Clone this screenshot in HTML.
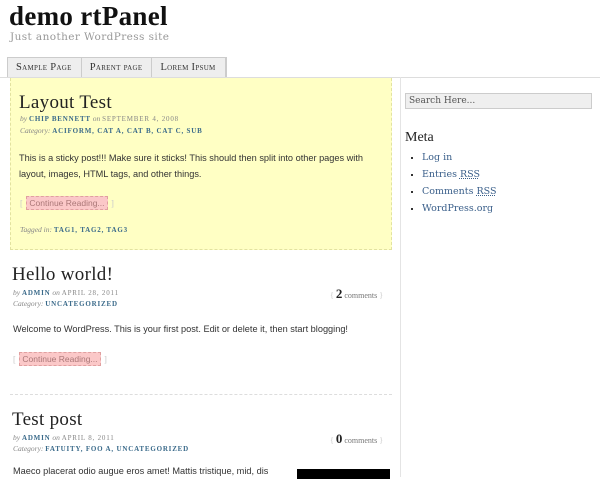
<!DOCTYPE html>
<html><head><style>
*{margin:0;padding:0;box-sizing:border-box}
body{width:600px;height:473px;overflow:hidden;background:#fff;font-family:"Liberation Serif",serif;color:#222;position:relative}
.a{position:absolute}
h1{font-size:27px;font-weight:bold;color:#111;left:9px;top:1px;letter-spacing:0.3px}
.tag{left:10px;top:31px;font-size:10.5px;color:#999;font-family:"DejaVu Serif",serif;letter-spacing:0.4px}
.nav{left:7px;top:57px;height:21px;display:flex;border:1px solid #ccc;border-bottom:none;background:#eee}
.nav div{padding:0 9px 0 8px;font-size:10.5px;line-height:20px;font-variant:small-caps;color:#333;border-right:1px solid #ccc;letter-spacing:0.3px}
.hr{left:0;top:77px;width:600px;height:1px;background:#ddd}
.vr{left:400px;top:77px;width:1px;height:400px;background:#e4e4e4}
.sticky{left:10px;top:78px;width:382px;height:172px;background:#ffffc4;border:1px dashed #e2e2a0;border-top:none}
.t{font-size:19px;color:#222;letter-spacing:0.3px}
.meta{font-size:7.5px;color:#888;font-style:italic;font-family:"Liberation Serif",serif}
.meta b{font-style:normal;color:#3a6a8a;letter-spacing:0.8px;font-weight:bold;font-size:7px}
.meta s{text-decoration:none;font-style:normal;letter-spacing:0.8px;font-size:7px}
.p{font-family:"Liberation Sans",sans-serif;font-size:9.2px;color:#333;line-height:16px}
.cr{font-family:"Liberation Sans",sans-serif;font-size:8.5px;color:#ccc}
.cr span{background:#fbc8c8;color:#a77;border:1px dashed #e0a0a0;padding:1px 2px;margin:0 4px}
.cm{font-size:8px;color:#777}
.cm b{font-size:13px;color:#222}
.dash{left:10px;top:394px;width:382px;border-top:1px dashed #ddd}
.search{left:405px;top:93px;width:187px;height:16px;border:1px solid #ccc;background:#efefef;font-size:9px;color:#555;padding:2px 3px;font-family:"DejaVu Serif",serif}
.side li{font-size:9.5px;color:#3a5f8a;margin-left:22px;height:17px;list-style:square;font-family:"DejaVu Serif",serif}
.side li::marker{color:#333;font-size:8px}
</style></head><body>
<h1 class="a">demo rtPanel</h1>
<div class="a tag">Just another WordPress site</div>
<div class="a nav"><div>Sample Page</div><div>Parent page</div><div>Lorem Ipsum</div></div>
<div class="a hr"></div>
<div class="a vr"></div>
<div class="a sticky"></div>
<div class="a t" style="left:19px;top:92px">Layout Test</div>
<div class="a meta" style="left:20px;top:114px">by <b>CHIP BENNETT</b> on <s>SEPTEMBER 4, 2008</s></div>
<div class="a meta" style="left:20px;top:126px">Category: <b>ACIFORM, CAT A, CAT B, CAT C, SUB</b></div>
<div class="a p" style="left:19px;top:150px;width:370px">This is a sticky post!!! Make sure it sticks! This should then split into other pages with layout, images, HTML tags, and other things.</div>
<div class="a cr" style="left:20px;top:198px">[<span>Continue Reading...</span>]</div>
<div class="a meta" style="left:20px;top:225px">Tagged in: <b>TAG1, TAG2, TAG3</b></div>

<div class="a t" style="left:12px;top:264px">Hello world!</div>
<div class="a meta" style="left:13px;top:288px">by <b>ADMIN</b> on <s>APRIL 28, 2011</s></div>
<div class="a meta" style="left:13px;top:299px">Category: <b>UNCATEGORIZED</b></div>
<div class="a cm" style="left:330px;top:286px"><span style="color:#ccc">{</span> <b>2</b> comments <span style="color:#ccc">}</span></div>
<div class="a p" style="left:13px;top:321px">Welcome to WordPress. This is your first post. Edit or delete it, then start blogging!</div>
<div class="a cr" style="left:13px;top:354px">[<span>Continue Reading...</span>]</div>
<div class="a dash"></div>
<div class="a t" style="left:12px;top:409px">Test post</div>
<div class="a meta" style="left:13px;top:433px">by <b>ADMIN</b> on <s>APRIL 8, 2011</s></div>
<div class="a meta" style="left:13px;top:444px">Category: <b>FATUITY, FOO A, UNCATEGORIZED</b></div>
<div class="a cm" style="left:330px;top:431px"><span style="color:#ccc">{</span> <b>0</b> comments <span style="color:#ccc">}</span></div>
<div class="a p" style="left:13px;top:463px">Maeco placerat odio augue eros amet! Mattis tristique, mid, dis</div>
<div class="a" style="left:297px;top:469px;width:93px;height:10px;background:#000"></div>

<div class="a search">Search Here...</div>
<div class="a" style="left:405px;top:130px;font-size:14px;color:#222">Meta</div>
<ul class="a side" style="left:400px;top:152px"><li>Log in</li><li>Entries <u style="text-decoration:underline dotted">RSS</u></li><li>Comments <u style="text-decoration:underline dotted">RSS</u></li><li>WordPress.org</li></ul>
</body></html>
